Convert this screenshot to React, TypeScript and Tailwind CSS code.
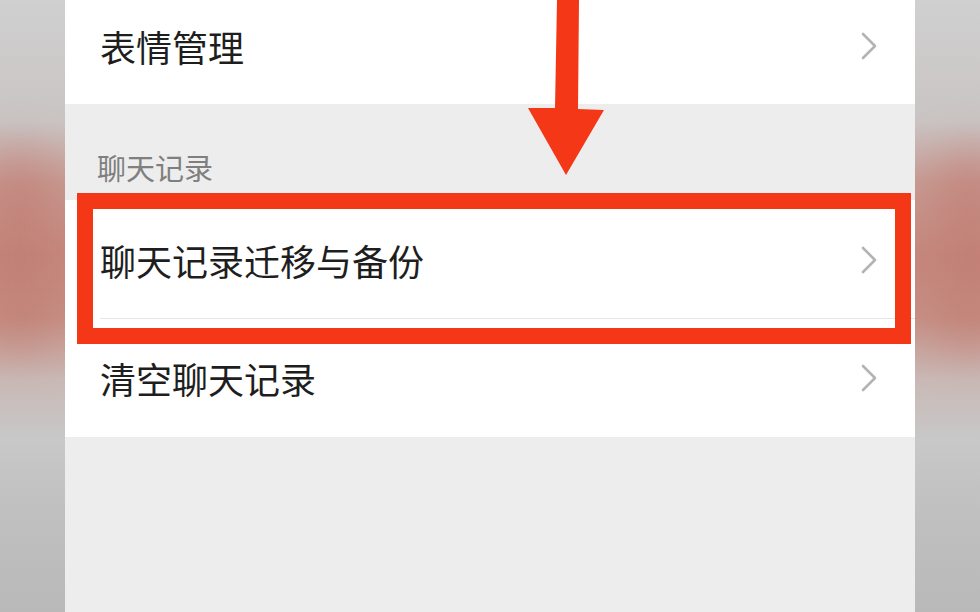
const font = { fontFamily: '"Noto Sans CJK SC", "Noto Sans", sans-serif' };

function Chevron() {
  return (
    <svg width="18" height="30" viewBox="0 0 18 30" className="text-[#b3b3b3]">
      <polyline points="3,3 15,15 3,27" fill="none" stroke="currentColor" strokeWidth="2.6" strokeLinecap="round" strokeLinejoin="round" />
    </svg>
  );
}

function Row({ label, className = "" }: { label: string; className?: string }) {
  return (
    <div className={`flex items-center justify-between bg-white pl-[35px] pr-[37px] ${className}`}>
      <span className="text-[36px] leading-none text-[#1e1e1e]">{label}</span>
      <Chevron />
    </div>
  );
}

function Side({ flip = false }: { flip?: boolean }) {
  return (
    <div className="relative w-[65px] shrink-0 overflow-hidden bg-[#c6c6c6]">
      <div className="absolute inset-0 bg-[linear-gradient(180deg,#d0d0d0_0%,#c9c4c3_20%,#c79a92_30%,#c5877c_42%,#c69085_52%,#c9b9b6_62%,#c8c8c8_72%,#bfbfbf_85%,#b9b9b9_100%)]" />
      <div
        className={`absolute top-[150px] h-[200px] w-[60px] rounded-full bg-[#c07a70] opacity-60 blur-xl ${flip ? "right-[-20px]" : "left-[-10px]"}`}
      />
    </div>
  );
}

export default function App() {
  return (
    <div className="flex h-[612px] w-[980px] overflow-hidden" style={font}>
      <Side />
      <div className="relative flex w-[850px] shrink-0 flex-col bg-[#ededed]">
        <Row label="表情管理" className="h-[104px] pb-[12px]" />
        <div className="flex h-[96px] items-end pb-[18px] pl-[32px]">
          <span className="text-[29px] leading-none text-[#7f7f7f]">聊天记录</span>
        </div>
        <div className="bg-white">
          <div className="relative">
            <Row label="聊天记录迁移与备份" className="h-[119px]" />
            <div className="absolute bottom-0 left-[35px] right-0 h-px bg-[#e6e6e6]" />
          </div>
          <Row label="清空聊天记录" className="h-[118px]" />
        </div>

        {/* highlight box */}
        <div className="absolute left-[12px] top-[193px] h-[151px] w-[834px] border-[16px] border-[#f43717]" />

        {/* arrow */}
        <svg className="absolute left-0 top-0" width="850" height="200" viewBox="65 0 850 200">
          <polygon
            points="557,0 579,0 578,109 604,110 566,175 528,108 555,108"
            fill="#f43717"
          />
        </svg>
      </div>
      <Side flip />
    </div>
  );
}
